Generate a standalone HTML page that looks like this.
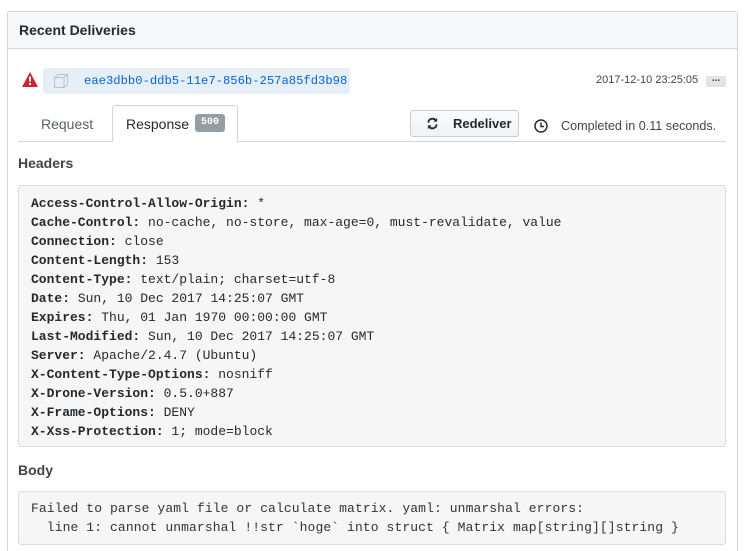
<!DOCTYPE html>
<html><head><style>
*{box-sizing:border-box;margin:0;padding:0}
html,body{width:745px;height:551px;overflow:hidden}
body{background:#fff;font-family:"Liberation Sans",sans-serif;color:#24292e;position:relative}
.box{position:absolute;left:7px;top:11px;width:731px;height:545px;border:1px solid #d1d5da;border-bottom:none;border-radius:3px 3px 0 0}
.hd{position:absolute;left:0;top:0;right:0;height:37px;background:#f6f8fa;border-bottom:1px solid #d1d5da;font-weight:bold;font-size:14px;line-height:37px;padding-left:11px}
.abs{position:absolute}
.mono{font-family:"Liberation Mono",monospace;font-size:13px;line-height:19px;color:#24292e}
.pre{position:absolute;left:18px;width:708px;background:#f6f6f6;border:1px solid #ddd;border-radius:3px;padding:9px 12px}
b{font-weight:bold}
</style></head><body>
<div class="box"><div class="hd">Recent Deliveries</div></div>
<svg class="abs" style="left:22px;top:72px" width="16" height="15" viewBox="0 0 16 15"><path d="M8 0L16 15H0Z" fill="#cb2431"/><rect x="7" y="4.5" width="2" height="5" fill="#fff"/><rect x="7" y="11" width="2" height="2" fill="#fff"/></svg>
<div class="abs" style="left:43px;top:68px;width:307px;height:26px;background:#e6eff6;border-radius:3px"></div>
<svg class="abs" style="left:53px;top:73px" width="16" height="15" viewBox="0 0 16 15" fill="none" stroke="#b4c3cf" stroke-width="1"><path d="M1.5 4.5L5 1.5H14.5V11.5L11 14.5H1.5Z M1.5 4.5H11V14.5 M11 4.5L14.5 1.5"/></svg>
<div class="abs mono" style="left:84px;top:72px;color:#0366d6;font-size:12.2px">eae3dbb0-ddb5-11e7-856b-257a85fd3b98</div>
<div class="abs" style="left:596px;top:74px;font-size:11px;color:#444">2017-12-10 23:25:05</div>
<div class="abs" style="left:706px;top:76px;width:20px;height:11px;background:#e1e4e8;font-size:10px;line-height:6px;text-align:center;font-weight:bold;color:#444">...</div>
<div class="abs" style="left:18px;top:141px;width:708px;height:1px;background:#d1d5da"></div>
<div class="abs" style="left:41px;top:116px;font-size:14px;color:#586069">Request</div>
<div class="abs" style="left:112px;top:105px;width:126px;height:37px;border:1px solid #d1d5da;border-bottom:none;background:#fff;border-radius:3px 3px 0 0"></div>
<div class="abs" style="left:126px;top:116px;font-size:14px">Response</div>
<div class="abs" style="left:195px;top:114px;width:30px;height:18px;background:#959da5;border-radius:3px;color:#fff;font-size:10px;font-weight:bold;text-align:center;line-height:18px;font-family:'Liberation Mono',monospace">500</div>
<div class="abs" style="left:410px;top:110px;width:109px;height:27px;border:1px solid #c8cdd2;border-radius:3px;background:linear-gradient(#fafbfc,#eff3f6)"></div>
<svg class="abs" style="left:426px;top:117px" width="13" height="13" viewBox="0 0 14 14" fill="none" stroke="#24292e" stroke-width="2"><path d="M2.5 6A4.5 4.5 0 0 1 10.5 3.5M11.5 8A4.5 4.5 0 0 1 3.5 10.5"/><path d="M12 1V5H8Z M2 13V9H6Z" fill="#24292e" stroke="none"/></svg>
<div class="abs" style="left:453px;top:116px;font-size:13px;font-weight:bold">Redeliver</div>
<svg class="abs" style="left:534px;top:119px" width="14" height="14" viewBox="0 0 14 14" fill="none" stroke="#24292e" stroke-width="1.5"><circle cx="7" cy="7" r="6"/><path d="M7 3.5V7.5H10"/></svg>
<div class="abs" style="left:561px;top:119px;font-size:12.6px;color:#444">Completed in 0.11 seconds.</div>
<div class="abs" style="left:18px;top:155px;font-size:14px;font-weight:bold;color:#444">Headers</div>
<div class="pre mono" style="top:185px;height:262px;padding-top:8px">
<b>Access-Control-Allow-Origin:</b> *<br>
<b>Cache-Control:</b> no-cache, no-store, max-age=0, must-revalidate, value<br>
<b>Connection:</b> close<br>
<b>Content-Length:</b> 153<br>
<b>Content-Type:</b> text/plain; charset=utf-8<br>
<b>Date:</b> Sun, 10 Dec 2017 14:25:07 GMT<br>
<b>Expires:</b> Thu, 01 Jan 1970 00:00:00 GMT<br>
<b>Last-Modified:</b> Sun, 10 Dec 2017 14:25:07 GMT<br>
<b>Server:</b> Apache/2.4.7 (Ubuntu)<br>
<b>X-Content-Type-Options:</b> nosniff<br>
<b>X-Drone-Version:</b> 0.5.0+887<br>
<b>X-Frame-Options:</b> DENY<br>
<b>X-Xss-Protection:</b> 1; mode=block
</div>
<div class="abs" style="left:18px;top:462px;font-size:14px;font-weight:bold;color:#444">Body</div>
<div class="pre mono" style="top:491px;height:54px;padding-top:7px;font-size:13px;letter-spacing:0.1px;white-space:pre;color:#333">Failed to parse yaml file or calculate matrix. yaml: unmarshal errors:
  line 1: cannot unmarshal !!str `hoge` into struct { Matrix map[string][]string }</div>
</body></html>
